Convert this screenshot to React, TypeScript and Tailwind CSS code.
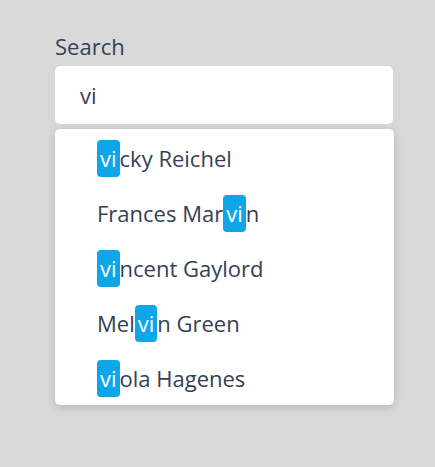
import { useState } from 'react';

const people = [
  'Vicky Reichel',
  'Frances Marvin',
  'Vincent Gaylord',
  'Melvin Green',
  'Viola Hagenes',
];

const Highlight = ({ name, query }: { name: string; query: string }) => {
  const idx = name.toLowerCase().indexOf(query.toLowerCase());
  if (idx < 0 || !query) return <span>{name}</span>;
  return (
    <>
      <span className="whitespace-pre">{name.slice(0, idx)}</span>
      <span className="h-[37px] flex items-center px-[3px] rounded-[4px] bg-[#0ea5e9] text-white">
        {query}
      </span>
      <span className="whitespace-pre">{name.slice(idx + query.length)}</span>
    </>
  );
};

export default function App() {
  const [query, setQuery] = useState('vi');

  return (
    <div
      className="min-h-screen bg-[#d9d9d9] px-[55px] pt-[31px] text-[#334155]"
      style={{ fontFamily: '"Open Sans", "Noto Sans", sans-serif' }}
    >
      <label className="block text-[22px] leading-[30px] mb-[5px]">Search</label>
      <input
        value={query}
        onChange={(e) => setQuery(e.target.value)}
        className="block w-[338px] h-[58px] rounded-[5px] bg-white px-[25px] text-[22px] outline-none"
      />
      <ul className="mt-[5px] w-[339px] pb-[1px] rounded-[5px] bg-white shadow-[0_2px_8px_rgba(0,0,0,0.18)]">
        {people
          .filter((p) => p.toLowerCase().includes(query.toLowerCase()))
          .map((p) => (
            <li key={p} className="h-[55px] flex items-center pl-[42px] pt-[3px] text-[22px]">
              <Highlight name={p} query={query} />
            </li>
          ))}
      </ul>
    </div>
  );
}
